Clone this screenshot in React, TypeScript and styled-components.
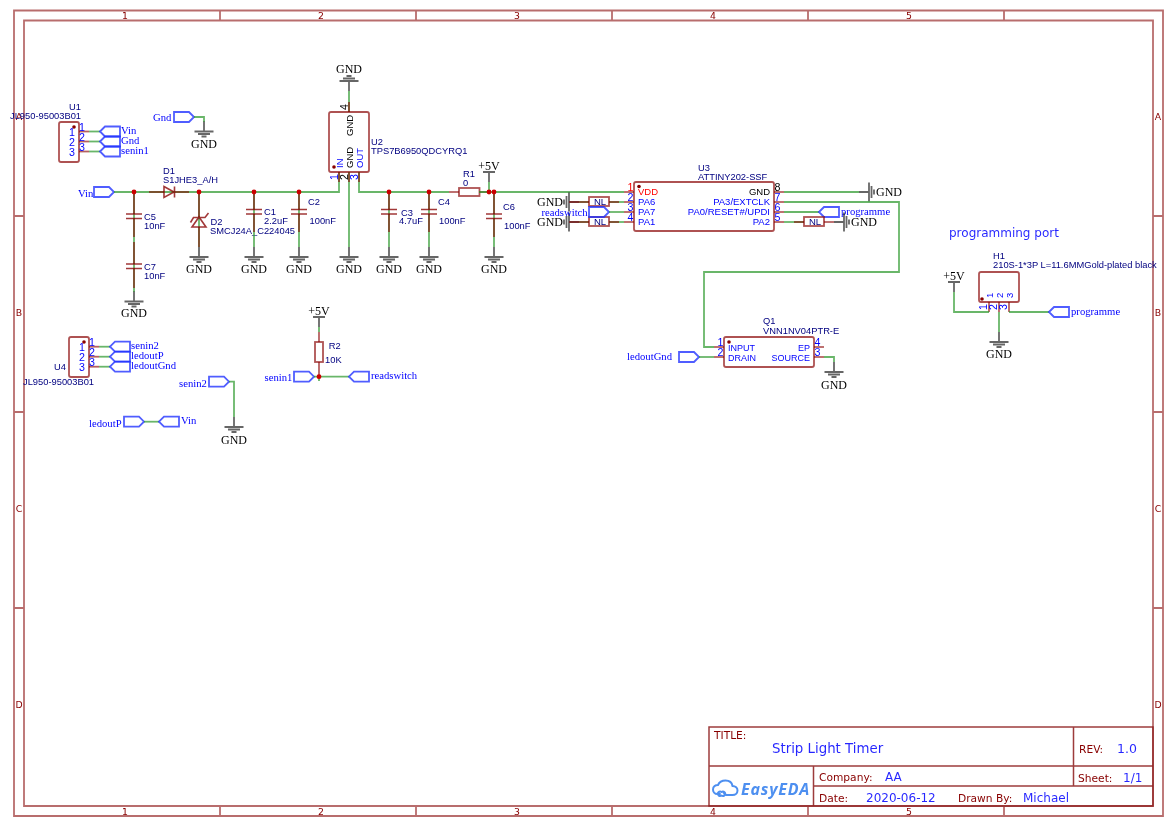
import React from "react";
import styled, { createGlobalStyle } from "styled-components";

const Global = createGlobalStyle`
  html, body { margin: 0; padding: 0; background: #fff; }
  #root { width: 1173px; height: 827px; overflow: hidden; }
`;

const Sheet = styled.svg`
  display: block;
  background: #fff;
  filter: blur(0.35px);
`;
const FrameLine = styled.path`
  fill: none;
  stroke: #a64848;
  stroke-width: 1.8;
  opacity: 0.8;
`;
const TitleLine = styled.path`
  fill: none;
  stroke: #8c1a1a;
  stroke-width: 1.5;
  opacity: 0.85;
`;
const WireLine = styled.polyline`
  fill: none;
  stroke: #2f9a2f;
  stroke-width: 1.8;
  opacity: 0.72;
`;
const PinLine = styled.line`
  stroke: #880000;
  stroke-width: 1.8;
  opacity: 0.62;
`;
const Ground = styled.path`
  fill: none;
  stroke: #000;
  stroke-width: 1.8;
  opacity: 0.6;
`;
const Body = styled.rect`
  fill: none;
  stroke: #880000;
  stroke-width: 1.8;
  opacity: 0.68;
`;
const Shape = styled.path`
  fill: none;
  stroke: #880000;
  stroke-width: 1.6;
  opacity: 0.78;
`;
const PortShape = styled.path`
  fill: #fff;
  fill-opacity: 0;
  stroke: #1f30ff;
  stroke-width: 1.8;
  opacity: 0.78;
`;
const Junction = styled.circle`
  fill: #cc0000;
`;
const PinDot = styled.circle`
  fill: #880000;
`;
const NetText = styled.text`
  font: 10.67px "Liberation Serif", serif;
  fill: #0000ff;
`;
const PowerText = styled.text<{ $mid?: boolean }>`
  font: 12px "Liberation Serif", serif;
  fill: #000;
  text-anchor: ${(p) => (p.$mid ? "middle" : "start")};
`;
const PartText = styled.text`
  font: 9.33px "Liberation Sans", sans-serif;
  fill: #000080;
`;
const PinName = styled.text<{ $end?: boolean; $c?: string; $size?: number }>`
  font: ${(p) => p.$size || 9.5}px "Liberation Sans", sans-serif;
  fill: ${(p) => p.$c || "#0000ff"};
  text-anchor: ${(p) => (p.$end ? "end" : "start")};
`;
const PinNum = styled.text<{ $c?: string }>`
  font: 10.67px "Liberation Sans", sans-serif;
  fill: ${(p) => p.$c || "#0000ff"};
  text-anchor: middle;
`;
const ZoneText = styled.text`
  font: 9.33px "DejaVu Sans", sans-serif;
  fill: #880000;
  text-anchor: middle;
`;
const TitleLabel = styled.text`
  font: 10.67px "DejaVu Sans", sans-serif;
  fill: #880000;
`;
const TitleValue = styled.text<{ $size?: number }>`
  font: ${(p) => p.$size || 12}px "DejaVu Sans", sans-serif;
  fill: #0000ff;
  opacity: 0.85;
`;
const LogoText = styled.text`
  font: italic bold 16px "Open Sans", "DejaVu Sans", sans-serif;
  fill: #4d8ff0;
  letter-spacing: 0.8px;
`;
const LogoMark = styled.path`
  fill: none;
  stroke: #4d8ff0;
  stroke-width: 2;
  stroke-linecap: round;
  stroke-linejoin: round;
`;

type Pt = [number, number];
const Wire = ({ p }: { p: Pt[] }) => <WireLine points={p.map((q) => q.join(",")).join(" ")} />;
const Pin = ({ a, b }: { a: Pt; b: Pt }) => <PinLine x1={a[0]} y1={a[1]} x2={b[0]} y2={b[1]} />;

const GndDown = ({ x, y, label = "GND", labelY }: { x: number; y: number; label?: string; labelY?: number }) => (
  <>
    <Ground d={`M${x} ${y - 10}V${y}M${x - 9.5} ${y}H${x + 9.5}M${x - 6} ${y + 2.5}H${x + 6}M${x - 2.5} ${y + 5}H${x + 2.5}`} />
    <PowerText $mid x={x} y={labelY ?? y + 16}>{label}</PowerText>
  </>
);
const GndUp = ({ x, y }: { x: number; y: number }) => (
  <>
    <Ground d={`M${x} ${y + 10}V${y}M${x - 9.5} ${y}H${x + 9.5}M${x - 6} ${y - 2.5}H${x + 6}M${x - 2.5} ${y - 5}H${x + 2.5}`} />
    <PowerText $mid x={x} y={y - 8}>GND</PowerText>
  </>
);
const GndLeft = ({ x, y, half = 9.5 }: { x: number; y: number; half?: number }) => (
  <>
    <Ground d={`M${x + 10} ${y}H${x}M${x} ${y - half}V${y + half}M${x - 2.5} ${y - 6}V${y + 6}M${x - 5} ${y - 2.5}V${y + 2.5}`} />
    <PowerText x={x - 32} y={y + 3.5}>GND</PowerText>
  </>
);
const GndRight = ({ x, y, half = 9.5 }: { x: number; y: number; half?: number }) => (
  <>
    <Ground d={`M${x - 10} ${y}H${x}M${x} ${y - half}V${y + half}M${x + 2.5} ${y - 6}V${y + 6}M${x + 5} ${y - 2.5}V${y + 2.5}`} />
    <PowerText x={x + 7} y={y + 4}>GND</PowerText>
  </>
);
const Plus5 = ({ x, y }: { x: number; y: number }) => (
  <>
    <Ground d={`M${x} ${y + 10}V${y}M${x - 6} ${y}H${x + 6}`} />
    <PowerText $mid x={x} y={y - 2}>+5V</PowerText>
  </>
);
/* x is the flat end on the left for "right" ports, tip on the left for "left" ports */
const Port = ({ x, y, tip }: { x: number; y: number; tip: "left" | "right" }) =>
  tip === "right" ? (
    <PortShape d={`M${x} ${y - 5}H${x + 15}L${x + 20} ${y}L${x + 15} ${y + 5}H${x}Z`} />
  ) : (
    <PortShape d={`M${x} ${y}L${x + 5} ${y - 5}H${x + 20}V${y + 5}H${x + 5}Z`} />
  );
const CapV = ({ x, y }: { x: number; y: number }) => (
  <Shape d={`M${x - 8} ${y}H${x + 8}M${x - 8} ${y + 4.5}H${x + 8}`} />
);
const NL = ({ x, y }: { x: number; y: number }) => (
  <>
    <Body x={x} y={y - 4.5} width={20} height={9} />
    <PinName x={x + 5} y={y + 3.7} $c="#000080">NL</PinName>
  </>
);

const junctions: Pt[] = [
  [134, 192], [199, 192], [254, 192], [299, 192], [389, 192], [429, 192], [489, 192], [494, 192], [319, 376.7],
];
const columns = [220, 416, 612, 808, 1004];
const rows = [216, 412, 608];
const colLabels: [string, number][] = [["1", 125], ["2", 321], ["3", 517], ["4", 713], ["5", 909]];
const rowLabels: [string, number][] = [["A", 116], ["B", 312], ["C", 508], ["D", 704]];

const frame =
  "M14 10.5H1163V816H14ZM24 20.5H1153V806H24Z" +
  columns.map((x) => `M${x} 10.5V20.5M${x} 806V816`).join("") +
  rows.map((y) => `M14 ${y}H24M1153 ${y}H1163`).join("");

const Connector = ({ x, y, numsFirst }: { x: number; y: number; numsFirst: number }) => (
  <>
    <Body x={x} y={y} width={20} height={40} rx={2} />
    <PinDot cx={x + 15} cy={y + 5} r={1.8} />
    {[0, 1, 2].map((i) => {
      const py = numsFirst + i * 10;
      return (
        <React.Fragment key={i}>
          <Pin a={[x + 20, py]} b={[x + 30, py]} />
          <Wire p={[[x + 30, py], [x + 41, py]]} />
          <PinNum x={x + 13} y={py + 4.5}>{i + 1}</PinNum>
          <PinNum x={x + 23} y={py - 0.5}>{i + 1}</PinNum>
          <Port x={x + 41} y={py} tip="left" />
        </React.Fragment>
      );
    })}
  </>
);

export default function App() {
  return (
    <>
      <Global />
      <Sheet width={1173} height={827} viewBox="0 0 1173 827">
        <FrameLine d={frame} />
        {colLabels.map(([t, x]) => (
          <React.Fragment key={t}>
            <ZoneText x={x} y={19}>{t}</ZoneText>
            <ZoneText x={x} y={815}>{t}</ZoneText>
          </React.Fragment>
        ))}
        {rowLabels.map(([t, y]) => (
          <React.Fragment key={t}>
            <ZoneText x={19} y={y + 3.5}>{t}</ZoneText>
            <ZoneText x={1158} y={y + 3.5}>{t}</ZoneText>
          </React.Fragment>
        ))}

        {/* U1 */}
        <PartText x={69} y={109.5}>U1</PartText>
        <PartText x={10} y={119}>JL950-95003B01</PartText>
        <Connector x={59} y={122} numsFirst={131.5} />
        <NetText x={121} y={134}>Vin</NetText>
        <NetText x={121} y={144}>Gnd</NetText>
        <NetText x={121} y={154}>senin1</NetText>

        {/* Gnd flag */}
        <NetText x={153} y={121}>Gnd</NetText>
        <Port x={174} y={117} tip="right" />
        <Wire p={[[194, 117], [204, 117], [204, 122]]} />
        <GndDown x={204} y={131.5} labelY={148} />

        {/* main rail left */}
        <NetText x={78} y={197}>Vin</NetText>
        <Port x={94} y={192} tip="right" />
        <Wire p={[[114, 192], [339, 192], [339, 172]]} />
        <Pin a={[149, 192]} b={[164, 192]} />
        <Pin a={[175, 192]} b={[189, 192]} />
        <Pin a={[339, 172]} b={[339, 182]} />
        <PartText x={163} y={174}>D1</PartText>
        <PartText x={163} y={183}>S1JHE3_A/H</PartText>
        <Shape d="M164 186.5L174 192L164 197.5ZM174.5 186.5V197.5" />

        {/* C5 / C7 */}
        <Wire p={[[134, 192], [134, 292]]} />
        <Pin a={[134, 192]} b={[134, 214]} />
        <Pin a={[134, 218.5]} b={[134, 237]} />
        <Pin a={[134, 242]} b={[134, 264]} />
        <Pin a={[134, 268.5]} b={[134, 288]} />
        <CapV x={134} y={214} />
        <CapV x={134} y={264} />
        <PartText x={144} y={220}>C5</PartText>
        <PartText x={144} y={229}>10nF</PartText>
        <PartText x={144} y={270}>C7</PartText>
        <PartText x={144} y={279}>10nF</PartText>
        <GndDown x={134} y={301.5} labelY={317} />

        {/* D2 */}
        <Wire p={[[199, 192], [199, 247]]} />
        <Pin a={[199, 192]} b={[199, 217]} />
        <Pin a={[199, 227]} b={[199, 247]} />
        <Shape d="M199 217L206 227H192ZM190.5 222.5L193.5 217.5H205L208.5 213" />
        <PartText x={210.5} y={225}>D2</PartText>
        <PartText x={210} y={234}>SMCJ24A_C224045</PartText>
        <GndDown x={199} y={257} labelY={272.5} />

        {/* C1 */}
        <Wire p={[[254, 192], [254, 247]]} />
        <Pin a={[254, 192]} b={[254, 209.5]} />
        <Pin a={[254, 214]} b={[254, 232]} />
        <CapV x={254} y={209.5} />
        <PartText x={264} y={215}>C1</PartText>
        <PartText x={264} y={224}>2.2uF</PartText>
        <GndDown x={254} y={257} labelY={272.5} />

        {/* C2 */}
        <Wire p={[[299, 192], [299, 247]]} />
        <Pin a={[299, 192]} b={[299, 209.5]} />
        <Pin a={[299, 214]} b={[299, 232]} />
        <CapV x={299} y={209.5} />
        <PartText x={308} y={205}>C2</PartText>
        <PartText x={309.5} y={224}>100nF</PartText>
        <GndDown x={299} y={257} labelY={272.5} />

        {/* U2 */}
        <GndUp x={349} y={81} />
        <Wire p={[[349, 91], [349, 112]]} />
        <Pin a={[349, 102]} b={[349, 112]} />
        <Body x={329} y={112} width={40} height={60} rx={2} />
        <PinDot cx={334} cy={167} r={1.8} />
        <PinName transform="rotate(-90 353 136)" x={353} y={136} $c="#000">GND</PinName>
        <PinName transform="rotate(-90 343 168)" x={343} y={168}>IN</PinName>
        <PinName transform="rotate(-90 353 168)" x={353} y={168} $c="#000">GND</PinName>
        <PinName transform="rotate(-90 363 168)" x={363} y={168}>OUT</PinName>
        <PinNum transform="rotate(-90 338 177)" x={338} y={177} >1</PinNum>
        <PinNum transform="rotate(-90 348 177)" x={348} y={177} $c="#000">2</PinNum>
        <PinNum transform="rotate(-90 358 177)" x={358} y={177}>3</PinNum>
        <PinNum transform="rotate(-90 348 107)" x={348} y={107} $c="#000">4</PinNum>
        <PartText x={371} y={145}>U2</PartText>
        <PartText x={371} y={154}>TPS7B6950QDCYRQ1</PartText>
        <Wire p={[[349, 172], [349, 247]]} />
        <Pin a={[349, 172]} b={[349, 182]} />
        <GndDown x={349} y={257} labelY={272.5} />

        {/* Output rail */}
        <Wire p={[[359, 172], [359, 192], [449, 192]]} />
        <Pin a={[359, 172]} b={[359, 182]} />
        <Wire p={[[389, 192], [389, 247]]} />
        <Pin a={[389, 192]} b={[389, 209.5]} />
        <Pin a={[389, 214]} b={[389, 232]} />
        <CapV x={389} y={209.5} />
        <PartText x={401} y={215.5}>C3</PartText>
        <PartText x={399} y={224}>4.7uF</PartText>
        <GndDown x={389} y={257} labelY={272.5} />
        <Wire p={[[429, 192], [429, 247]]} />
        <Pin a={[429, 192]} b={[429, 209.5]} />
        <Pin a={[429, 214]} b={[429, 232]} />
        <CapV x={429} y={209.5} />
        <PartText x={438} y={205}>C4</PartText>
        <PartText x={439} y={224}>100nF</PartText>
        <GndDown x={429} y={257} labelY={272.5} />

        {/* R1 */}
        <Pin a={[449, 192]} b={[459, 192]} />
        <Pin a={[479, 192]} b={[489, 192]} />
        <Body x={459} y={188} width={20.5} height={8} />
        <PartText x={463} y={177}>R1</PartText>
        <PartText x={463} y={186}>0</PartText>
        <Wire p={[[479, 192], [624, 192]]} />
        <Plus5 x={489} y={172} />
        <Wire p={[[489, 182], [489, 192]]} />

        {/* C6 */}
        <Wire p={[[494, 192], [494, 247]]} />
        <Pin a={[494, 192]} b={[494, 214]} />
        <Pin a={[494, 218.5]} b={[494, 237]} />
        <CapV x={494} y={214} />
        <PartText x={503} y={210}>C6</PartText>
        <PartText x={504} y={229}>100nF</PartText>
        <GndDown x={494} y={257} labelY={272.5} />

        {/* U3 */}
        <PartText x={698} y={170.5}>U3</PartText>
        <PartText x={698} y={179.5}>ATTINY202-SSF</PartText>
        <Body x={634} y={182} width={140} height={49} rx={2} />
        <PinDot cx={639} cy={186.5} r={1.8} />
        {[192, 202, 212, 222].map((y) => (
          <React.Fragment key={y}>
            <Pin a={[624, y]} b={[634, y]} />
            <Pin a={[774, y]} b={[784, y]} />
          </React.Fragment>
        ))}
        <PinNum x={630.5} y={191} $c="#ff0000">1</PinNum>
        <PinNum x={630.5} y={201}>2</PinNum>
        <PinNum x={630.5} y={211}>3</PinNum>
        <PinNum x={630.5} y={221}>4</PinNum>
        <PinNum x={777.5} y={191} $c="#000">8</PinNum>
        <PinNum x={777.5} y={201}>7</PinNum>
        <PinNum x={777.5} y={211}>6</PinNum>
        <PinNum x={777.5} y={221}>5</PinNum>
        <PinName x={638} y={195} $c="#ff0000">VDD</PinName>
        <PinName x={638} y={205}>PA6</PinName>
        <PinName x={638} y={215}>PA7</PinName>
        <PinName x={638} y={225}>PA1</PinName>
        <PinName $end x={770} y={195} $c="#000">GND</PinName>
        <PinName $end x={770} y={205}>PA3/EXTCLK</PinName>
        <PinName $end x={770} y={215}>PA0/RESET#/UPDI</PinName>
        <PinName $end x={770} y={225}>PA2</PinName>

        {/* U3 left side */}
        <GndLeft x={569} y={202} />
        <GndLeft x={569} y={222} />
        <Wire p={[[579, 202], [589, 202]]} />
        <Wire p={[[579, 222], [589, 222]]} />
        <Pin a={[569, 202]} b={[589, 202]} />
        <Pin a={[569, 222]} b={[589, 222]} />
        <NL x={589} y={201.5} />
        <NL x={589} y={221.5} />
        <Wire p={[[609, 202], [624, 202]]} />
        <Wire p={[[609, 222], [624, 222]]} />
        <Pin a={[609, 202]} b={[619, 202]} />
        <Pin a={[609, 222]} b={[619, 222]} />
        <NetText x={541.5} y={216}>readswitch</NetText>
        <Port x={589} y={212} tip="right" />
        <Wire p={[[609, 212], [624, 212]]} />

        {/* U3 right side */}
        <Wire p={[[784, 192], [859, 192]]} />
        <GndRight x={869} y={192} />
        <Wire p={[[784, 202], [899, 202], [899, 272], [704, 272], [704, 347], [714, 347]]} />
        <Wire p={[[784, 212], [819, 212]]} />
        <Port x={819} y={212} tip="left" />
        <NetText x={841} y={214.5}>programme</NetText>
        <Wire p={[[784, 222], [804, 222]]} />
        <Pin a={[794, 222]} b={[804, 222]} />
        <NL x={804} y={221.5} />
        <Pin a={[824, 222]} b={[834, 222]} />
        <GndRight x={844} y={222} />

        {/* Q1 */}
        <PartText x={763} y={324}>Q1</PartText>
        <PartText x={763} y={333.5}>VNN1NV04PTR-E</PartText>
        <Body x={724} y={337} width={90} height={30} rx={2} />
        <PinDot cx={729} cy={342} r={1.8} />
        <Pin a={[714, 347]} b={[724, 347]} />
        <Pin a={[714, 357]} b={[724, 357]} />
        <Pin a={[814, 347]} b={[824, 347]} />
        <Pin a={[814, 357]} b={[824, 357]} />
        <PinNum x={720.5} y={346}>1</PinNum>
        <PinNum x={720.5} y={356}>2</PinNum>
        <PinNum x={817.5} y={346}>4</PinNum>
        <PinNum x={817.5} y={356}>3</PinNum>
        <PinName $size={9} x={728} y={351}>INPUT</PinName>
        <PinName $size={9} x={728} y={361}>DRAIN</PinName>
        <PinName $size={9} $end x={810} y={351}>EP</PinName>
        <PinName $size={9} $end x={810} y={361}>SOURCE</PinName>
        <NetText x={627} y={360}>ledoutGnd</NetText>
        <Port x={679} y={357} tip="right" />
        <Wire p={[[699, 357], [714, 357]]} />
        <Wire p={[[824, 357], [834, 357], [834, 362]]} />
        <GndDown x={834} y={372} labelY={388.5} />

        {/* U4 */}
        <PartText x={54} y={370}>U4</PartText>
        <PartText x={23} y={385}>JL950-95003B01</PartText>
        <Connector x={69} y={337} numsFirst={346.7} />
        <NetText x={131} y={349}>senin2</NetText>
        <NetText x={131} y={359}>ledoutP</NetText>
        <NetText x={131} y={369}>ledoutGnd</NetText>

        {/* senin2 */}
        <NetText x={179} y={386.5}>senin2</NetText>
        <Port x={209} y={381.7} tip="right" />
        <Wire p={[[229, 381.7], [234, 381.7], [234, 417]]} />
        <GndDown x={234} y={427} labelY={443.5} />

        {/* ledoutP */}
        <NetText x={89} y={426.5}>ledoutP</NetText>
        <Port x={124} y={421.7} tip="right" />
        <Wire p={[[144, 421.7], [159, 421.7]]} />
        <Port x={159} y={421.7} tip="left" />
        <NetText x={181} y={423.5}>Vin</NetText>

        {/* R2 */}
        <Plus5 x={319} y={317} />
        <Wire p={[[319, 327], [319, 332]]} />
        <Pin a={[319, 332]} b={[319, 342]} />
        <Body x={315} y={342} width={8} height={20} />
        <Pin a={[319, 362]} b={[319, 376.7]} />
        <Wire p={[[319, 376.7], [319, 381]]} />
        <PartText x={328.7} y={349}>R2</PartText>
        <PartText x={325} y={363}>10K</PartText>
        <NetText x={264.5} y={381}>senin1</NetText>
        <Port x={294} y={376.7} tip="right" />
        <Wire p={[[314, 376.7], [349, 376.7]]} />
        <Port x={349} y={376.7} tip="left" />
        <NetText x={371} y={378.5}>readswitch</NetText>

        {/* H1 */}
        <TitleValue $size={12} x={949} y={237}>programming port</TitleValue>
        <PartText x={993} y={259}>H1</PartText>
        <PartText x={993} y={268}>210S-1*3P L=11.6MMGold-plated black</PartText>
        <Body x={979} y={272} width={40} height={30} rx={2} />
        <PinDot cx={982} cy={299} r={1.8} />
        <Pin a={[989, 302]} b={[989, 312]} />
        <Pin a={[999, 302]} b={[999, 312]} />
        <Pin a={[1009, 302]} b={[1009, 312]} />
        <PinName transform="rotate(-90 993 298)" x={993} y={298}>1</PinName>
        <PinName transform="rotate(-90 1003 298)" x={1003} y={298}>2</PinName>
        <PinName transform="rotate(-90 1013 298)" x={1013} y={298}>3</PinName>
        <PinNum transform="rotate(-90 987 307)" x={987} y={307}>1</PinNum>
        <PinNum transform="rotate(-90 997 307)" x={997} y={307}>2</PinNum>
        <PinNum transform="rotate(-90 1007 307)" x={1007} y={307}>3</PinNum>
        <Plus5 x={954} y={282} />
        <Wire p={[[954, 292], [954, 312], [989, 312]]} />
        <Wire p={[[999, 312], [999, 332]]} />
        <GndDown x={999} y={342} labelY={358} />
        <Wire p={[[1009, 312], [1049, 312]]} />
        <Port x={1049} y={312} tip="left" />
        <NetText x={1071} y={314.5}>programme</NetText>

        {junctions.map(([x, y]) => (
          <Junction key={`${x}-${y}`} cx={x} cy={y} r={2.4} />
        ))}

        {/* Title block */}
        <TitleLine d="M709 727H1153V806H709ZM1073.5 727V786M709 766H1153M813.5 766V806M813.5 786H1153" />
        <TitleLabel x={714} y={739}>TITLE:</TitleLabel>
        <TitleValue $size={13.33} x={772} y={752.5}>Strip Light Timer</TitleValue>
        <TitleLabel x={1079} y={753}>REV:</TitleLabel>
        <TitleValue $size={12.5} x={1117} y={753}>1.0</TitleValue>
        <TitleLabel x={819} y={780.5}>Company:</TitleLabel>
        <TitleValue x={885} y={780.5}>AA</TitleValue>
        <TitleLabel x={1078} y={782}>Sheet:</TitleLabel>
        <TitleValue x={1123} y={782}>1/1</TitleValue>
        <TitleLabel x={819} y={802}>Date:</TitleLabel>
        <TitleValue x={866} y={802}>2020-06-12</TitleValue>
        <TitleLabel x={958} y={802}>Drawn By:</TitleLabel>
        <TitleValue x={1023} y={802}>Michael</TitleValue>
        <LogoMark d="M720 794H717.5C714.5 794 713 791.5 713 789.5C713 786.5 715.5 785 718 785C719.5 781.5 722.5 780.5 725.5 780.5C729.5 780.5 732 783 732.5 786C735.5 786 737.5 788 737.5 790.5C737.5 793 735.5 795 732.5 795H726L723.5 792.5" />
        <LogoMark d="M721.5 795.5A2.2 2.2 0 1 0 721.5 792A2.2 2.2 0 1 0 721.5 795.5Z" />
        <LogoText x={741} y={794.5}>EasyEDA</LogoText>
      </Sheet>
    </>
  );
}
